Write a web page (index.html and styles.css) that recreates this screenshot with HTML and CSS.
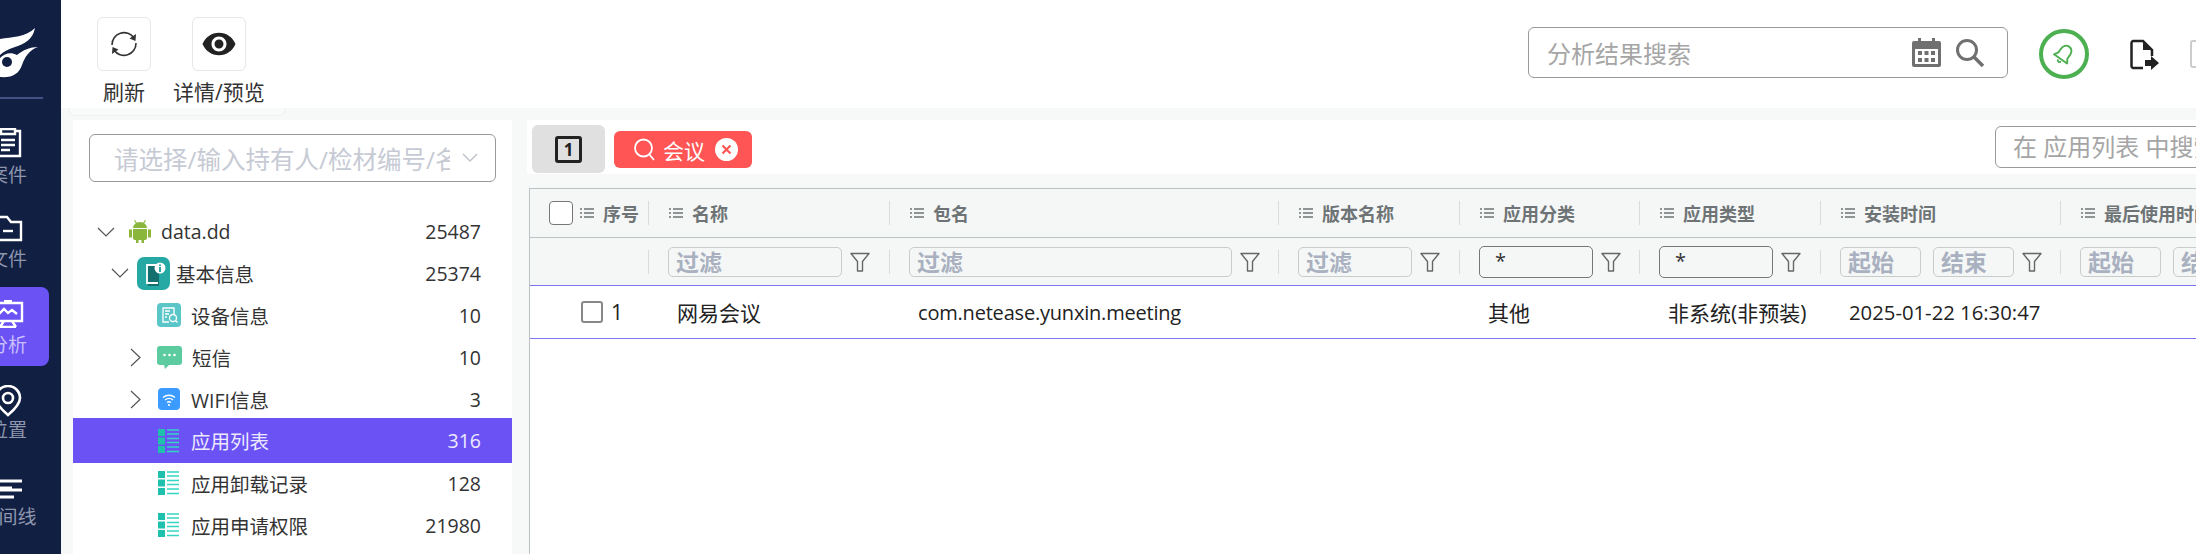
FILE: index.html
```html
<!DOCTYPE html>
<html>
<head>
    <title>分析</title>
    <meta charset="utf-8">
    <link rel="stylesheet" href="styles.css">
</head>
<body>
    <div class="app">
        <aside class="sidebar">
            <div class="side-inner">
                <div class="logo">
                    <svg width="40" height="80" viewBox="0 0 40 80" fill="#fff"><path d="M35 28C33 39 25 44 15 47 8 49 3 52 0 55V39C12 37 26 37 35 28z"/><path d="M38 47C29 50 25 57 22 65 19 74 12 78 0 77V58C5 53 11 52 17 55 23 50 30 47 38 47z"/><circle cx="7" cy="62" r="5" fill="#111f43"/></svg>
                </div>
                <nav class="side-nav">
                    <a class="side-item">
                        <svg width="30" height="30" viewBox="0 0 30 30" fill="none" stroke="#fff" stroke-width="2.4"><path d="M8 3H3v25h24V3h-5"/><path d="M8 1h14v5H8z"/><path d="M8 12h14M8 17h14M8 22h9"/></svg>
                        <span>案件</span>
                    </a>
                    <a class="side-item">
                        <svg width="30" height="28" viewBox="0 0 30 28" fill="none" stroke="#fff" stroke-width="2.4"><path d="M2 3h12l4 5h10v18H2z"/><path d="M10 17h10"/></svg>
                        <span>文件</span>
                    </a>
                    <a class="side-item active">
                        <svg width="32" height="28" viewBox="0 0 32 28" fill="none" stroke="#fff" stroke-width="2.4"><path d="M2 3h28v18H2zM12 1h8"/><path d="M7 14l5-5 4 4 4-3 5 4"/><path d="M12 21l-4 6M20 21l4 6M8 27h16"/></svg>
                        <span>分析</span>
                    </a>
                    <a class="side-item place">
                        <svg width="28" height="32" viewBox="0 0 28 32" fill="none" stroke="#fff" stroke-width="2.6"><path d="M14 30C8 25 2 19 2 13a12 12 0 0 1 24 0c0 6-6 12-12 17z"/><circle cx="14" cy="13" r="5"/></svg>
                        <span>位置</span>
                    </a>
                    <a class="side-item timeline">
                        <svg width="30" height="20" viewBox="0 0 30 20" fill="none" stroke="#fff" stroke-width="3"><path d="M0 2h29M0 9h19M0 11h29M0 18h21"/></svg>
                        <span>时间线</span>
                    </a>
                </nav>
            </div>
        </aside>

        <div class="page">
            <header class="topbar">
                <div class="tools">
                    <div class="tool">
                        <div class="tool-box">
                            <svg width="28" height="28" viewBox="0 0 28 28" fill="none" stroke="#333" stroke-width="1.6"><path d="M2 15a12 12 0 0 1 22-7"/><path d="M26 13a12 12 0 0 1-22 7"/><path fill="#333" stroke="none" d="M26 4l-.5 7-6-2.5zM2 24l.5-7 6 2.5z"/></svg>
                        </div>
                        <span>刷新</span>
                    </div>
                    <div class="tool">
                        <div class="tool-box">
                            <svg width="36" height="36" viewBox="0 0 24 24" fill="#222"><path d="M12 4.5C7 4.5 2.73 7.61 1 12c1.73 4.39 6 7.5 11 7.5s9.27-3.11 11-7.5c-1.73-4.39-6-7.5-11-7.5zM12 17c-2.76 0-5-2.24-5-5s2.24-5 5-5 5 2.24 5 5-2.24 5-5 5zm0-8c-1.66 0-3 1.34-3 3s1.34 3 3 3 3-1.34 3-3-1.34-3-3-3z"/></svg>
                        </div>
                        <span>详情/预览</span>
                    </div>
                </div>
                <div class="top-right">
                    <div class="top-search">
                        <span class="top-search-text">分析结果搜索</span>
                        <svg width="29" height="29" viewBox="0 0 29 29"><path fill="#707070" fill-rule="evenodd" d="M6 0h3v3h11V0h3v3h4a2 2 0 0 1 2 2v22a2 2 0 0 1-2 2H2a2 2 0 0 1-2-2V5a2 2 0 0 1 2-2h4zM3 11v15h23V11z"/><path fill="#707070" d="M6 13h4v4H6zM12.500 13h4v4h-4zM19 13h4v4h-4zM6 20h4v4H6zM12.500 20h4v4h-4zM19 20h4v4h-4z"/></svg>
                        <svg width="30" height="28" viewBox="0 0 30 28" fill="none" stroke="#707070"><circle cx="12" cy="11" r="9.500" stroke-width="3"/><path d="M19 18l9 9" stroke-width="3.500"/></svg>
                    </div>
                    <div class="bell-ring">
                        <svg width="24" height="24" viewBox="0 0 24 24" fill="none" stroke="#4caf50" stroke-width="1.900" stroke-linejoin="round" stroke-linecap="round"><g transform="rotate(35 12 12)"><path d="M12 3c-3.500 0-5.500 2.800-5.500 6.500V14L4 18h16l-2.500-4V9.500C17.500 5.800 15.500 3 12 3z"/><path d="M10.500 20.500a1.600 1.600 0 0 0 3 0"/></g></svg>
                    </div>
                    <svg class="doc-icon" width="29" height="31" viewBox="0 0 29 31"><path fill="none" stroke="#222" stroke-width="2.500" d="M13 29H3a2 2 0 0 1-1.500-2V4A2 2 0 0 1 3 2h10l9 9v6"/><path fill="#222" d="M13 1l10 10H13zM15 21h6v-4l8 7-8 7v-4h-6z"/></svg>
                    <div class="cut-icon"></div>
                </div>
            </header>

            <main class="main">
                <section class="tree-panel">
                    <div class="case-select">
                        <span class="case-select-text">请选择/输入持有人/检材编号/名称</span>
                        <svg width="16" height="10" viewBox="0 0 16 10" fill="none" stroke="#c0c4cc" stroke-width="1.500"><path d="M1 1l7 7 7-7"/></svg>
                    </div>
                    <ul class="tree">
                        <li class="tree-row lv0">
                            <svg class="arrow" width="18" height="10" viewBox="0 0 18 10" fill="none" stroke="#555" stroke-width="1.200"><path d="M1 1l8 8 8-8"/></svg>
                            <svg class="android" width="22" height="23" viewBox="0 0 22 23" fill="#8ab63c"><path d="M4 8a7 6 0 0 1 14 0zM4 9h14v9a2 2 0 0 1-2 2h-1v3h-2.500v-3h-3v3H7v-3H6a2 2 0 0 1-2-2zM0 9.500h3v8H0zM19 9.500h3v8h-3zM6 0l2 3-1 .5-2-3zM16 0l1 .5-2 3-1-.5z"/></svg>
                            <span class="name">data.dd</span>
                            <span class="count">25487</span>
                        </li>
                        <li class="tree-row lv1">
                            <svg class="arrow" width="18" height="10" viewBox="0 0 18 10" fill="none" stroke="#555" stroke-width="1.200"><path d="M1 1l8 8 8-8"/></svg>
                            <svg class="info-icon" width="33" height="33" viewBox="0 0 33 33"><rect width="33" height="33" rx="7" fill="#26a9a5"/><path fill="#14706e" d="M11 8h11v21H11z"/><path fill="none" stroke="#fff" stroke-width="1.800" d="M21 26H10V8h9"/><circle cx="23" cy="11" r="5.500" fill="#fff"/><path fill="#26a9a5" d="M22 10h2v5h-2zM22 7.500h2v1.500h-2z"/></svg>
                            <span class="name">基本信息</span>
                            <span class="count">25374</span>
                        </li>
                        <li class="tree-row lv2">
                            <svg width="24" height="24" viewBox="0 0 24 24"><rect width="24" height="24" rx="4" fill="#5bc6c8"/><path fill="none" stroke="#fff" stroke-width="1.300" d="M17 11V5H6v14h6M8 8h5M8 11h4M8 14h2"/><circle cx="16" cy="15" r="3.500" fill="none" stroke="#fff" stroke-width="1.300"/><path stroke="#fff" stroke-width="1.300" d="M18.500 17.500l2 2"/></svg>
                            <span class="name">设备信息</span>
                            <span class="count">10</span>
                        </li>
                        <li class="tree-row lv2">
                            <svg class="arrow-r" width="11" height="19" viewBox="0 0 11 19" fill="none" stroke="#555" stroke-width="1.200"><path d="M1 1l9 8.500-9 8.500"/></svg>
                            <svg width="25" height="23" viewBox="0 0 25 23"><path fill="#5ccba0" d="M3 0h19a3 3 0 0 1 3 3v13a3 3 0 0 1-3 3H12l-4 4-1-4H3a3 3 0 0 1-3-3V3a3 3 0 0 1 3-3z"/><circle cx="7.500" cy="9" r="1.300" fill="#fff"/><circle cx="12.500" cy="9" r="1.300" fill="#fff"/><circle cx="17.500" cy="9" r="1.300" fill="#fff"/></svg>
                            <span class="name">短信</span>
                            <span class="count">10</span>
                        </li>
                        <li class="tree-row lv2">
                            <svg class="arrow-r" width="11" height="19" viewBox="0 0 11 19" fill="none" stroke="#555" stroke-width="1.200"><path d="M1 1l9 8.500-9 8.500"/></svg>
                            <svg width="24" height="22" viewBox="0 0 24 22"><rect x="1" width="22" height="22" rx="4" fill="#3b9bff"/><path fill="none" stroke="#fff" stroke-width="1.300" d="M6 9.500c3.500-3 8.500-3 12 0M8 12c2.500-2 5.500-2 8 0M10 14.500c1.300-1 2.700-1 4 0"/><circle cx="12" cy="17" r="1.100" fill="#fff"/></svg>
                            <span class="name">WIFI信息</span>
                            <span class="count">3</span>
                        </li>
                        <li class="tree-row lv2 active">
                            <svg width="24" height="24" viewBox="0 0 24 24"><use href="#app-list"/></svg>
                            <span class="name">应用列表</span>
                            <span class="count">316</span>
                        </li>
                        <li class="tree-row lv2">
                            <svg width="24" height="24" viewBox="0 0 24 24"><use href="#app-list"/></svg>
                            <span class="name">应用卸载记录</span>
                            <span class="count">128</span>
                        </li>
                        <li class="tree-row lv2">
                            <svg width="24" height="24" viewBox="0 0 24 24"><use href="#app-list"/></svg>
                            <span class="name">应用申请权限</span>
                            <span class="count">21980</span>
                        </li>
                    </ul>
                </section>

                <section class="content">
                    <div class="tabs">
                        <button class="tab-num"><span>1</span></button>
                        <div class="tag">
                            <svg width="23" height="23" viewBox="0 0 23 23" fill="none" stroke="#fff" stroke-width="1.800"><circle cx="10.500" cy="10" r="8.500"/><path d="M16 16l5 6"/></svg>
                            <span>会议</span>
                            <svg width="23" height="23" viewBox="0 0 23 23"><circle cx="11.500" cy="11.500" r="11.500" fill="#fff"/><path stroke="#ff5555" stroke-width="2.200" d="M7.500 7.500l8 8M15.500 7.500l-8 8"/></svg>
                        </div>
                        <div class="table-search">在 应用列表 中搜索</div>
                    </div>

                    <div class="table">
                        <div class="t-row t-head">
                            <div class="cell first"><i class="check"></i><svg class="lines" viewBox="0 0 14 12"><use href="#col-lines"/></svg><b>序号</b></div>
                            <div class="cell"><svg class="lines" viewBox="0 0 14 12"><use href="#col-lines"/></svg><b>名称</b></div>
                            <div class="cell"><svg class="lines" viewBox="0 0 14 12"><use href="#col-lines"/></svg><b>包名</b></div>
                            <div class="cell"><svg class="lines" viewBox="0 0 14 12"><use href="#col-lines"/></svg><b>版本名称</b></div>
                            <div class="cell"><svg class="lines" viewBox="0 0 14 12"><use href="#col-lines"/></svg><b>应用分类</b></div>
                            <div class="cell"><svg class="lines" viewBox="0 0 14 12"><use href="#col-lines"/></svg><b>应用类型</b></div>
                            <div class="cell"><svg class="lines" viewBox="0 0 14 12"><use href="#col-lines"/></svg><b>安装时间</b></div>
                            <div class="cell"><svg class="lines" viewBox="0 0 14 12"><use href="#col-lines"/></svg><b>最后使用时间</b></div>
                        </div>
                        <div class="t-row t-filter">
                            <div class="cell first"></div>
                            <div class="cell"><span class="filter w174">过滤</span><svg class="funnel" viewBox="0 0 20 20"><use href="#funnel"/></svg></div>
                            <div class="cell"><span class="filter w323">过滤</span><svg class="funnel" viewBox="0 0 20 20"><use href="#funnel"/></svg></div>
                            <div class="cell"><span class="filter w114">过滤</span><svg class="funnel" viewBox="0 0 20 20"><use href="#funnel"/></svg></div>
                            <div class="cell"><span class="filter w114 star">*</span><svg class="funnel" viewBox="0 0 20 20"><use href="#funnel"/></svg></div>
                            <div class="cell"><span class="filter w114 star">*</span><svg class="funnel" viewBox="0 0 20 20"><use href="#funnel"/></svg></div>
                            <div class="cell"><span class="filter w81">起始</span><span class="filter w81">结束</span><svg class="funnel" viewBox="0 0 20 20"><use href="#funnel"/></svg></div>
                            <div class="cell"><span class="filter w81">起始</span><span class="filter w81">结束</span></div>
                        </div>
                        <div class="t-row t-data">
                            <div class="td first"><i class="row-check"></i>1</div>
                            <div class="td">网易会议</div>
                            <div class="td pkg">com.netease.yunxin.meeting</div>
                            <div class="td"></div>
                            <div class="td">其他</div>
                            <div class="td">非系统(非预装)</div>
                            <div class="td time">2025-01-22 16:30:47</div>
                            <div class="td"></div>
                        </div>
                    </div>
                </section>
            </main>
        </div>
    </div>

    <svg width="0" height="0" class="defs">
        <symbol id="app-list" viewBox="0 0 24 24">
            <path fill="#1fc1ad" d="M1 0h7v7H1zM1 8.500h7v7H1zM1 17h7v7H1z"/>
            <path stroke="#34d6c2" stroke-width="1.400" d="M10 1h12M10 5h12M10 9.500h12M10 13.500h12M10 18h12M10 22.500h12"/>
        </symbol>
        <symbol id="col-lines" viewBox="0 0 14 12">
            <path stroke="#6e7476" stroke-width="1.500" d="M0 2h2M4 2h10M0 6h2M4 6h10M0 10h2M4 10h10"/>
        </symbol>
        <symbol id="funnel" viewBox="0 0 20 20">
            <path fill="none" stroke="#666" stroke-width="1.400" stroke-linejoin="round" d="M1 1.500h18l-6.500 8V19h-5V9.500z"/>
        </symbol>
    </svg>
</body>
</html>
```
FILE: styles.css
```css
html, body {
    margin: 0;
    height: 100%;
    overflow: hidden;
}
body {
    font-family: "Open Sans", "Noto Sans CJK SC", sans-serif;
    color: #333;
    background: #f7f8f8;
}
.defs {
    display: block;
}
.app {
    display: flex;
    width: 2196px;
    height: 554px;
}

/* left nav, its left part is cut off by the window */
.sidebar {
    flex: 0 0 61px;
    overflow: hidden;
    background: #111f43;
}
.side-inner {
    width: 106px;
    margin-left: -45px;
}
.logo {
    box-sizing: border-box;
    height: 99px;
    padding-left: 45px;
    margin-right: 18px;
    border-bottom: 2px solid #454f82;
}
.logo svg {
    display: block;
}
.side-nav {
    display: flex;
    flex-direction: column;
    gap: 7px;
    padding: 16px 12px 0;
}
.side-item {
    display: flex;
    flex-direction: column;
    align-items: center;
    gap: 4px;
    box-sizing: border-box;
    height: 79px;
    padding-top: 13px;
    border-radius: 8px;
    color: #8e96ad;
    font-size: 19px;
    line-height: 26px;
}
.side-item.active {
    background: #6b52f5;
    color: #c9c0fc;
}
.side-item.place {
    padding-top: 12px;
    gap: 0;
}
.side-item.timeline {
    padding-top: 20px;
    gap: 5px;
}
.side-item span {
    white-space: nowrap;
}

/* top toolbar */
.page {
    flex: 1;
    min-width: 0;
    display: flex;
    flex-direction: column;
}
.topbar {
    flex: 0 0 108px;
    display: flex;
    justify-content: space-between;
    background: #fff;
}
.tools {
    position: relative;
    display: flex;
    gap: 22px;
    box-sizing: border-box;
    width: 218px;
    height: 108px;
    margin-left: 7px;
    padding: 17px 0 0 29px;
}
/* lower edge of the tool group shows under the white bar */
.tools::after {
    content: "";
    position: absolute;
    left: 0;
    right: 0;
    top: 100%;
    height: 8px;
    box-sizing: border-box;
    background: #f9fafa;
    border: 1px solid #f0f1f1;
    border-top: 0;
    border-radius: 0 0 8px 8px;
}
.tool {
    display: flex;
    flex-direction: column;
    align-items: center;
    gap: 6px;
    font-size: 21px;
    line-height: 30px;
    white-space: nowrap;
}
.tool-box {
    display: flex;
    align-items: center;
    justify-content: center;
    box-sizing: border-box;
    width: 54px;
    height: 54px;
    border: 1px solid #e6e6e6;
    border-radius: 6px;
}
.top-right {
    display: flex;
    align-items: center;
}
.top-search {
    display: flex;
    align-items: center;
    box-sizing: border-box;
    width: 480px;
    height: 51px;
    margin-bottom: 3px;
    padding: 0 22px 0 18px;
    border: 1px solid #999;
    border-radius: 6px;
    gap: 14px;
}
.top-search-text {
    flex: 1;
    color: #a5a5a5;
    font-size: 24px;
}
.bell-ring {
    display: flex;
    align-items: center;
    justify-content: center;
    box-sizing: border-box;
    width: 50px;
    height: 50px;
    margin-left: 31px;
    border: 4px solid #4caf50;
    border-radius: 50%;
}
.doc-icon {
    margin-left: 41px;
}
.cut-icon {
    box-sizing: border-box;
    width: 30px;
    height: 28px;
    margin-left: 31px;
    margin-right: -24px;
    border: 2px solid #ccc;
    border-radius: 3px;
}

.main {
    flex: 1;
    min-height: 0;
    display: flex;
    gap: 15px;
    padding: 12px 0 0 12px;
}

/* tree */
.tree-panel {
    flex: 0 0 439px;
    width: 439px;
    min-width: 0;
    box-sizing: border-box;
    padding: 14px 16px 0;
    background: #fff;
}
.case-select {
    display: flex;
    align-items: center;
    box-sizing: border-box;
    height: 48px;
    padding: 0 17px 0 24px;
    border: 1px solid #999;
    border-radius: 6px;
    gap: 12px;
}
.case-select-text {
    flex: 1;
    min-width: 0;
    overflow: hidden;
    white-space: nowrap;
    color: #c6cad4;
    font-size: 24.5px;
}
.case-select svg {
    flex: none;
}
.tree {
    list-style: none;
    margin: 29px -16px 0;
    padding: 0;
}
.tree-row {
    display: flex;
    align-items: center;
    height: 42px;
    padding-right: 31px;
    font-size: 19.5px;
    color: #333;
}
.tree-row svg {
    flex: none;
}
.tree-row .name {
    flex: 1;
    margin-left: 10px;
}
.tree-row.lv0 {
    height: 41px;
    padding-left: 24px;
}
.tree-row.lv0 .android {
    margin-left: 14px;
}
.tree-row.lv0 .name {
    margin-left: 10px;
}
.tree-row.lv1 {
    padding-left: 38px;
}
.tree-row.lv1 .info-icon {
    margin-left: 8px;
}
.tree-row.lv1 .name {
    margin-left: 6px;
}
.tree-row.lv2 {
    padding-left: 84px;
}
.tree-row.lv2 .arrow-r {
    margin: 0 16px 0 -27px;
}
.tree-row.active {
    height: 45px;
    margin: -2px 0 -1px;
    background: #6b52f5;
    color: #ece9ff;
}

/* right side */
.content {
    flex: 1;
    min-width: 0;
    display: flex;
    flex-direction: column;
}
.tabs {
    flex: 0 0 54px;
    display: flex;
    align-items: center;
    background: #fff;
    padding-left: 5px;
}
.tab-num {
    flex: none;
    display: flex;
    align-items: center;
    justify-content: center;
    width: 73px;
    height: 48px;
    margin-top: 4px;
    padding: 0;
    border: 0;
    border-radius: 6px;
    background: #e0e0e0;
}
.tab-num span {
    box-sizing: border-box;
    width: 27px;
    height: 27px;
    border: 3px solid #222;
    border-radius: 3px;
    color: #222;
    font: bold 17px/21px "Noto Sans", sans-serif;
}
.tag {
    flex: none;
    display: flex;
    align-items: center;
    gap: 7px;
    box-sizing: border-box;
    width: 138px;
    height: 37px;
    margin: 5px 0 0 9px;
    padding-left: 19px;
    border-radius: 6px;
    background: #ff5555;
    color: #fff;
    font-size: 21px;
}
.tag svg:last-child {
    margin-left: 3px;
}
.table-search {
    box-sizing: border-box;
    flex: none;
    width: 320px;
    height: 42px;
    margin-left: auto;
    margin-right: -119px;
    padding-left: 17px;
    border: 1px solid #999;
    border-radius: 6px;
    color: #a5a5a5;
    font-size: 24px;
    line-height: 40px;
    white-space: nowrap;
    overflow: hidden;
}
.table {
    flex: 1;
    width: 1700px;
    margin: 14px 0 0 2px;
    background: #fff;
    border: 1px solid #bcc3c7;
    border-bottom: 0;
}
.t-row {
    display: grid;
    grid-template-columns: 119px 241px 389px 181px 180px 181px 240px 240px;
    align-items: center;
}
.t-head {
    height: 48px;
    background: #f5f7f7;
    border-bottom: 1px solid #bcc3c7;
}
.t-filter {
    height: 47px;
    background: #f5f7f7;
    border-bottom: 1px solid #7b75f5;
}
.t-data {
    height: 52px;
    border-bottom: 1px solid #7b75f5;
}
.cell {
    display: flex;
    align-items: center;
    box-sizing: border-box;
    height: 24px;
    padding-left: 20px;
    border-right: 1px solid #d8dcdc;
}
.cell.first {
    padding-left: 19px;
}
.cell b {
    margin-left: 9px;
    color: #6e7476;
    font-size: 18px;
    white-space: nowrap;
}
.lines {
    flex: none;
    width: 14px;
    height: 12px;
}
.check {
    flex: none;
    box-sizing: border-box;
    width: 24px;
    height: 24px;
    margin-right: 7px;
    border: 1px solid #777;
    border-radius: 4px;
    background: #fff;
}
.filter {
    flex: none;
    box-sizing: border-box;
    height: 30px;
    padding-left: 7px;
    border: 1px solid #c8cccc;
    border-radius: 5px;
    color: #a9b0bf;
    font-size: 23px;
    font-weight: bold;
    line-height: 28px;
}
.filter + .filter {
    margin-left: 12px;
}
.filter.star {
    height: 32px;
    padding-left: 15px;
    border-color: #777;
    color: #333;
    font-size: 20px;
    font-weight: normal;
    background: #f5f7f7;
}
.w174 { width: 174px; }
.w323 { width: 323px; }
.w114 { width: 114px; }
.w81 { width: 81px; }
.t-filter .cell {
    padding-left: 19px;
}
.funnel {
    flex: none;
    width: 20px;
    height: 20px;
    margin-left: 8px;
}
.td {
    padding-left: 28px;
    font-size: 21px;
    color: #222;
    white-space: nowrap;
}
.td.pkg {
    font-size: 20px;
    letter-spacing: -0.2px;
}
.td.time {
    font-size: 20.3px;
}
.td.first {
    display: flex;
    align-items: center;
    padding-left: 51px;
}
.row-check {
    box-sizing: border-box;
    width: 22px;
    height: 22px;
    margin-right: 8px;
    border: 2px solid #888;
    border-radius: 3px;
}
```
